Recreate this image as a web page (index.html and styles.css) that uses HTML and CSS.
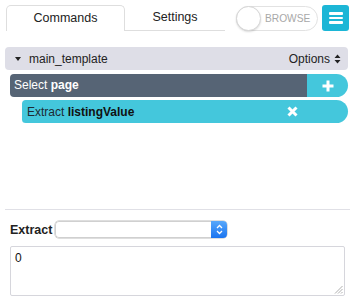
FILE: index.html
```html
<!DOCTYPE html>
<html>
<head>
<meta charset="utf-8">
<link rel="stylesheet" href="styles.css">
</head>
<body>
<div class="header">
  <div class="tabs">
    <div class="tab active">Commands</div>
    <div class="tab">Settings</div>
  </div>
  <div class="toggle">
    <div class="knob"></div>
    <span class="toggle-label">BROWSE</span>
  </div>
  <div class="menu-btn">
    <span class="line"></span><span class="line"></span><span class="line"></span>
  </div>
</div>
<div class="tree">
  <div class="template-bar">
    <span class="caret"></span>
    <span class="template-name">main_template</span>
    <span class="options">Options
      <svg class="updown" width="7" height="10" viewBox="0 0 7 10"><path d="M3.5 0.5 L6.5 4 L0.5 4 Z M3.5 9.5 L6.5 6 L0.5 6 Z" fill="#222"/></svg>
    </span>
  </div>
  <div class="cmd-select">
    <div class="cmd-main">Select <b>page</b></div>
    <div class="cmd-add">
      <svg width="12" height="12" viewBox="0 0 12 12"><path d="M6 0.5 V11.5 M0.5 6 H11.5" stroke="#fff" stroke-width="3"/></svg>
    </div>
  </div>
  <div class="cmd-extract">
    <span class="cmd-text">Extract <b>listingValue</b></span>
    <svg class="close" width="11" height="11" viewBox="0 0 11 11"><path d="M1.5 1.5 L9.5 9.5 M9.5 1.5 L1.5 9.5" stroke="#fff" stroke-width="3"/></svg>
  </div>
</div>
<div class="panel">
  <div class="form-row">
    <span class="form-label">Extract</span>
    <div class="fake-select">
      <div class="sel-body"></div>
      <div class="sel-arrow">
        <svg width="7" height="11" viewBox="0 0 7 11"><path d="M1 4 L3.5 1.5 L6 4 M1 7 L3.5 9.5 L6 7" stroke="#fff" stroke-width="1.3" fill="none"/></svg>
      </div>
    </div>
  </div>
  <div class="textarea">0
    <svg class="grip" width="9" height="9" viewBox="0 0 9 9"><path d="M8.5 1 L1 8.5 M8.5 4 L4 8.5 M8.5 7 L7 8.5" stroke="#999" stroke-width="0.8"/></svg>
  </div>
</div>
</body>
</html>
```
FILE: styles.css
```css
* { box-sizing: border-box; }
html, body { margin: 0; padding: 0; background: #fff; }
body {
  width: 359px;
  height: 305px;
  font-family: "Liberation Sans", Arial, sans-serif;
  font-size: 12px;
  color: #222;
  overflow: hidden;
}
.header {
  display: flex;
  align-items: flex-start;
  padding: 5px 0 0 6px;
}
.tabs { display: flex; }
.tab {
  height: 26px;
  line-height: 25px;
  text-align: center;
  font-size: 12.5px;
  color: #222;
}
.tab.active {
  width: 119px;
  border: 1px solid #dedede;
  border-bottom: none;
  border-radius: 5px 5px 0 0;
}
.tab:not(.active) {
  width: 100px;
  border-bottom: 1px solid #dedede;
}
.toggle {
  margin-left: 11px;
  margin-top: 1px;
  width: 82px;
  height: 25px;
  border: 1px solid #e2e2e2;
  border-radius: 13px;
  display: flex;
  align-items: center;
  background: #fff;
}
.knob {
  width: 25px;
  height: 25px;
  margin: -1px 0 0 -1px;
  border-radius: 50%;
  background: #fff;
  border: 1px solid #d6d6d6;
  box-shadow: 0 1px 2px rgba(0,0,0,0.15);
  flex: none;
}
.toggle-label {
  margin-left: 4px;
  font-size: 10.2px;
  color: #a8a8a8;
}
.menu-btn {
  margin-left: 4px;
  width: 27px;
  height: 26px;
  border-radius: 3px;
  background: #1cb6d6;
  display: flex;
  flex-direction: column;
  align-items: center;
  justify-content: center;
  gap: 2px;
}
.menu-btn .line {
  width: 14px;
  height: 2.5px;
  background: #fff;
  border-radius: 1px;
}
.tree {
  padding: 16px 11px 0 5px;
  display: flex;
  flex-direction: column;
}
.template-bar {
  height: 23px;
  background: #dedee7;
  border-radius: 4px;
  display: flex;
  align-items: center;
  padding: 0 7px 0 10px;
  color: #222;
}
.caret {
  width: 0; height: 0;
  border-left: 3px solid transparent;
  border-right: 3px solid transparent;
  border-top: 4px solid #222;
  margin-right: 8px;
}
.template-name { flex: 1; font-size: 12px; }
.options { display: flex; align-items: center; gap: 4px; font-size: 12px; }
.cmd-select {
  margin: 4px 0 0 5px;
  height: 23px;
  display: flex;
}
.cmd-main {
  flex: 1;
  background: #566475;
  color: #fff;
  border-radius: 4px 0 0 4px;
  line-height: 23px;
  padding-left: 4px;
}
.cmd-main b, .cmd-text b { font-weight: bold; }
.cmd-add {
  width: 41px;
  background: #44c7dc;
  border-radius: 0 12px 12px 0;
  display: flex;
  align-items: center;
  justify-content: flex-start;
  padding-left: 15px;
}
.cmd-extract {
  margin: 3px 0 0 17px;
  height: 23px;
  background: #44c7dc;
  border-radius: 4px 12px 12px 4px;
  display: flex;
  align-items: center;
  padding-left: 5px;
  color: #1d2a33;
}
.cmd-text { flex: 1; }
.cmd-text b { color: #111; }
.close { margin-right: 50px; }
.panel {
  margin: 86px 9px 0 5px;
  border-top: 1px solid #e0e0e6;
  padding: 11px 0 0 5px;
}
.form-row {
  display: flex;
  align-items: center;
  height: 17px;
}
.form-label {
  font-weight: bold;
  font-size: 12.5px;
  color: #222;
  width: 45px;
}
.fake-select {
  width: 172px;
  height: 17px;
  display: flex;
  border-radius: 4px;
  box-shadow: 0 0 0 0.5px #bdbdbd;
  overflow: hidden;
}
.sel-body {
  flex: 1;
  background: #fff;
  border: 1px solid #d0d0d0;
  border-right: none;
  border-radius: 4px 0 0 4px;
}
.sel-arrow {
  width: 16px;
  background: linear-gradient(#58a8fb, #1a74f0);
  display: flex;
  align-items: center;
  justify-content: center;
}
.textarea {
  position: relative;
  margin-top: 8px;
  width: 335px;
  height: 50px;
  border: 1px solid #d6d6dc;
  border-radius: 2px;
  padding: 4px 0 0 4px;
  font-size: 12px;
  color: #111;
}
.grip { position: absolute; right: 1px; bottom: 1px; }
```
